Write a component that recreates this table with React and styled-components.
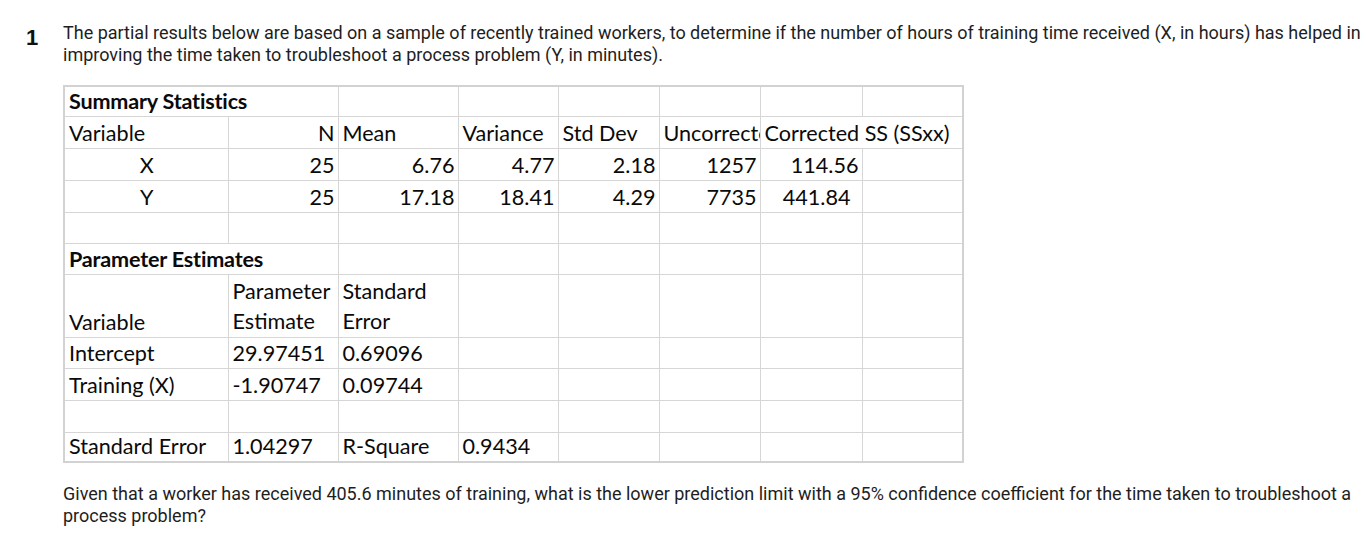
import styled, { createGlobalStyle } from "styled-components";

const Global = createGlobalStyle`
  body {
    margin: 0;
    background: #fff;
    font-family: Roboto, "Liberation Sans", sans-serif;
    color: #1e1e1e;
  }
`;

const Page = styled.div`
  display: flex;
  padding: 22px 0 0 26px;
  width: 1366px;
  box-sizing: border-box;
`;
const Number = styled.div`
  width: 37px;
  flex: none;
  font-family: "Liberation Sans", Arial, sans-serif;
  font-weight: bold;
  font-size: 22px;
  line-height: 22px;
  padding-top: 5px;
  color: #111;
`;
const Body = styled.div`
  display: flex;
  flex-direction: column;
`;
const Prompt = styled.p`
  margin: 0;
  font-size: 18px;
  line-height: 22px;
  white-space: nowrap;
`;
const Sheet = styled.table`
  margin: 19px 0 20px;
  border-collapse: collapse;
  table-layout: fixed;
  width: 899px;
  border: 2px solid #d2d2d2;
  font-family: Lato, "Liberation Sans", sans-serif;
  font-size: 21.6px;
  color: #0a0a0a;
`;
const Row = styled.tr`
  height: ${(p) => p.$h}px;
`;
const Cell = styled.td`
  border: 1px solid #d6d6d6;
  padding: 0 ${(p) => p.$pr ?? 3}px 1px 4px;
  vertical-align: bottom;
  white-space: nowrap;
  overflow: hidden;
  line-height: ${(p) => p.$lh ?? 27}px;
  text-align: ${(p) => p.$align || "left"};
  font-weight: ${(p) => (p.$bold ? 700 : 400)};
  letter-spacing: ${(p) => (p.$bold ? "-0.2px" : "0")};
`;

const widths = [164, 110, 120, 100, 101, 101, 102, 101];

const Empty = ({ n }) =>
  Array.from({ length: n }, (_, i) => <Cell key={i} />);

export default function App() {
  return (
    <>
      <Global />
      <Page>
        <Number>1</Number>
        <Body>
          <Prompt>
            The partial results below are based on a sample of recently trained workers, to determine if the number of hours of training time received (X, in hours) has helped in
            <br />
            improving the time taken to troubleshoot a process problem (Y, in minutes).
          </Prompt>
          <Sheet>
            <colgroup>
              {widths.map((w, i) => (
                <col key={i} style={{ width: w }} />
              ))}
            </colgroup>
            <tbody>
              <Row $h={30}>
                <Cell colSpan={2} $bold>Summary Statistics</Cell>
                <Empty n={6} />
              </Row>
              <Row $h={32}>
                <Cell>Variable</Cell>
                <Cell $align="right">N</Cell>
                <Cell>Mean</Cell>
                <Cell>Variance</Cell>
                <Cell>Std Dev</Cell>
                <Cell>Uncorrected SS</Cell>
                <Cell colSpan={2}>Corrected SS (SSxx)</Cell>
              </Row>
              <Row $h={32}>
                <Cell $align="center">X</Cell>
                <Cell $align="right">25</Cell>
                <Cell $align="right">6.76</Cell>
                <Cell $align="right">4.77</Cell>
                <Cell $align="right">2.18</Cell>
                <Cell $align="right">1257</Cell>
                <Cell $align="right">114.56</Cell>
                <Cell />
              </Row>
              <Row $h={32}>
                <Cell $align="center">Y</Cell>
                <Cell $align="right">25</Cell>
                <Cell $align="right">17.18</Cell>
                <Cell $align="right">18.41</Cell>
                <Cell $align="right">4.29</Cell>
                <Cell $align="right">7735</Cell>
                <Cell $align="right" $pr={11}>441.84</Cell>
                <Cell />
              </Row>
              <Row $h={31}>
                <Empty n={8} />
              </Row>
              <Row $h={31}>
                <Cell colSpan={2} $bold>Parameter Estimates</Cell>
                <Empty n={6} />
              </Row>
              <Row $h={63}>
                <Cell>Variable</Cell>
                <Cell $lh={30}>Parameter<br />Estimate</Cell>
                <Cell $lh={30}>Standard<br />Error</Cell>
                <Empty n={5} />
              </Row>
              <Row $h={31}>
                <Cell>Intercept</Cell>
                <Cell>29.97451</Cell>
                <Cell>0.69096</Cell>
                <Empty n={5} />
              </Row>
              <Row $h={32}>
                <Cell>Training (X)</Cell>
                <Cell>-1.90747</Cell>
                <Cell>0.09744</Cell>
                <Empty n={5} />
              </Row>
              <Row $h={32}>
                <Empty n={8} />
              </Row>
              <Row $h={30}>
                <Cell>Standard Error</Cell>
                <Cell>1.04297</Cell>
                <Cell>R-Square</Cell>
                <Cell>0.9434</Cell>
                <Empty n={4} />
              </Row>
            </tbody>
          </Sheet>
          <Prompt>
            Given that a worker has received 405.6 minutes of training, what is the lower prediction limit with a 95% confidence coefficient for the time taken to troubleshoot a
            <br />
            process problem?
          </Prompt>
        </Body>
      </Page>
    </>
  );
}
